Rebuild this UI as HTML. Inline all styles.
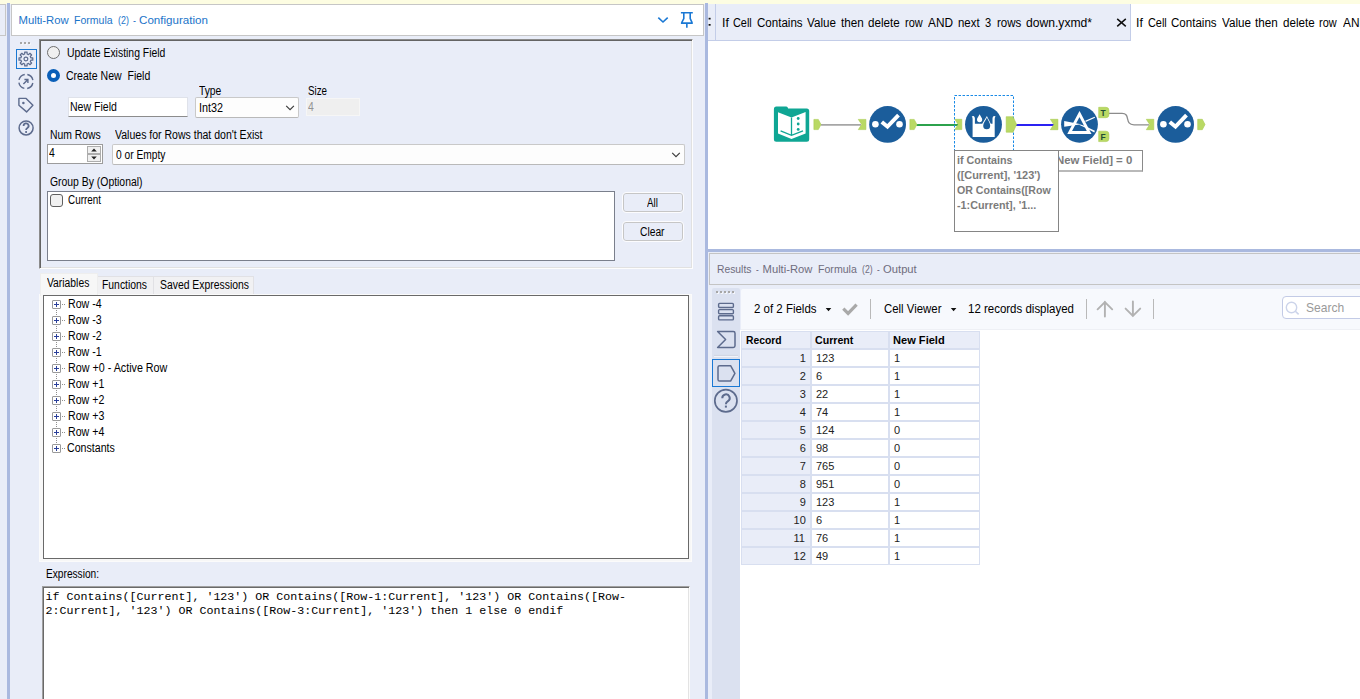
<!DOCTYPE html>
<html>
<head>
<meta charset="utf-8">
<title>Alteryx Designer</title>
<style>
html,body{margin:0;padding:0;}
body{width:1360px;height:699px;overflow:hidden;background:#e9edf8;font-family:"Liberation Sans",sans-serif;font-size:12px;color:#000;position:relative;}
.a{position:absolute;box-sizing:border-box;}
.t{position:absolute;white-space:pre;line-height:16px;height:16px;transform-origin:0 50%;}
svg{position:absolute;left:0;top:0;overflow:visible;}
#top{left:0;top:0;width:1360px;height:4px;background:#fdfde2;}
#lgut{left:-2px;top:4px;width:8px;height:32px;background:#e9edf8;border:1px solid #c6c6c6;}
#lbar{left:7px;top:3px;width:3px;height:700px;background:#aab9df;}
#chead{left:11px;top:4px;width:693px;height:32px;background:#fff;border:1px solid #c6c6c6;}
#vbar{left:705px;top:3px;width:3px;height:700px;background:#aab9df;}
#cfg{left:39px;top:39px;width:654px;height:230px;background:#e9edf8;border-top:1px solid #8c8c8c;border-left:1px solid #8c8c8c;border-right:1px solid #fdfdfd;border-bottom:1px solid #fdfdfd;box-shadow:inset 1px 1px 0 #646464,inset -1px -1px 0 #e1e1e1;}
#gearbox{left:16px;top:49px;width:21px;height:20px;border:1px solid #1a78d2;background:#e9edf8;}
.radio{width:13px;height:13px;border-radius:50%;}
.inp{background:#fff;border:1px solid #dfe2ea;border-bottom:1px solid #8c8c8c;}
.sel{background:#fdfdfd;border:1px solid #c9c9c9;border-bottom-color:#b9b9b9;border-radius:2px;}
.btn{background:#e9edf8;border:1px solid #fcfcfe;border-radius:4px;box-shadow:inset 0 0 0 1px #c6c6c6;}
.tab{background:#f1f1f3;border:1px solid #e1e1e5;border-bottom:none;}
.box{background:#fff;border:1px solid #696969;}
.tr{position:absolute;left:52px;width:9px;height:9px;box-sizing:border-box;border:1px solid #9a9a9a;background:#fff;border-radius:1px;}
.tr:before{content:"";position:absolute;left:1px;top:3px;width:5px;height:1px;background:#2a3f9a;}
.tr:after{content:"";position:absolute;left:3px;top:1px;width:1px;height:5px;background:#2a3f9a;}
#canvas{left:708px;top:4px;width:652px;height:245px;background:#fff;}
#tab1{left:715px;top:4px;width:416px;height:37px;background:#e9edf8;border:1px solid #c3cde8;border-top:none;}
#tab0{left:708px;top:4px;width:8px;height:37px;background:#e9edf8;border-bottom:1px solid #c3cde8;}
#hbar{left:708px;top:249px;width:652px;height:3px;background:#aab9df;}
#res{left:708px;top:252px;width:652px;height:447px;background:#e9edf8;}
#rhead{left:709px;top:253px;width:660px;height:32px;border:1px solid #c4c4c4;background:#e9edf8;}
#rside{left:712px;top:288px;width:28px;height:420px;background:#dbe1f0;border-radius:2px 2px 0 0;}
#rtool{left:741px;top:289px;width:619px;height:41px;background:#f7f9fd;border-radius:2px 0 0 0;border-bottom:1px solid #eef0f5;}
#rbody{left:740px;top:330px;width:620px;height:370px;background:#fff;}
#search{left:1282px;top:296px;width:90px;height:23px;background:#fff;border:1px solid #c3cbe6;border-radius:4px;}
table{position:absolute;left:741px;top:331px;border-collapse:separate;border-spacing:0;}
td{box-sizing:border-box;height:18px;padding:0;border-right:2px solid #d8dff0;border-bottom:2px solid #d8dff0;}
td.r0{height:19px;border-top:1px solid #d8dff0;}
td.c1{width:71px;border-left:1px solid #d8dff0;}
td.c2{width:78px;}
td.c3{width:90px;border-right-width:1px;}
td.h{background:#e9edf8;}
td.w{background:#fff;}
tr:last-child td{height:17px;border-bottom-width:1px;}
</style>
</head>
<body>
<div class="a" id="top"></div>
<div class="a" id="lgut"></div>
<div class="a" id="lbar"></div>
<div class="a" id="chead"></div>
<div class="a" id="vbar"></div>
<div class="a" id="cfg"></div>
<div class="a" id="gearbox"></div>
<!-- radios -->
<div class="a radio" style="left:47px;top:46px;background:#f0f0f0;border:1px solid #6e6e6e;"></div>
<div class="a radio" style="left:47px;top:69px;background:#fff;border:4px solid #0a5fb8;"></div>
<!-- inputs -->
<div class="a inp" style="left:68px;top:97px;width:120px;height:20px;"></div>
<div class="a sel" style="left:195px;top:97px;width:104px;height:21px;"></div>
<div class="a" style="left:306px;top:98px;width:54px;height:18px;background:#efefef;border:1px solid #f6f6f6;"></div>
<div class="a" style="left:47px;top:144px;width:56px;height:20px;background:#fff;border:1px solid #9c9c9c;"></div>
<div class="a" style="left:87px;top:146px;width:14px;height:8px;background:#f0f0f0;border:1px solid #adadad;"></div>
<div class="a" style="left:87px;top:154px;width:14px;height:8px;background:#f0f0f0;border:1px solid #adadad;"></div>
<div class="a sel" style="left:112px;top:144px;width:573px;height:21px;"></div>
<div class="a" style="left:47px;top:191px;width:568px;height:70px;background:#fff;border:1px solid #7a7f8c;"></div>
<div class="a" style="left:50px;top:194px;width:13px;height:13px;background:#f1f1f1;border:1px solid #5f5f5f;border-radius:3px;"></div>
<div class="a btn" style="left:622px;top:192px;width:62px;height:21px;"></div>
<div class="a btn" style="left:622px;top:221px;width:62px;height:21px;"></div>
<!-- tabs -->
<div class="a tab" style="left:97px;top:276px;width:57px;height:18px;"></div>
<div class="a tab" style="left:153px;top:276px;width:101px;height:18px;"></div>
<div class="a" style="left:39px;top:294px;width:653px;height:268px;background:#f7f7f7;border:1px solid #fbfbfb;"></div>
<div class="a" style="left:40px;top:273px;width:58px;height:23px;background:#f7f7f7;border:1px solid #eeeeee;border-bottom:none;"></div>
<div class="a box" style="left:43px;top:295px;width:646px;height:264px;"></div>
<div class="a" style="left:42px;top:586px;width:648px;height:130px;background:#fff;border-top:1px solid #a0a0a0;border-left:1px solid #a0a0a0;border-right:1px solid #fbfbfb;box-shadow:inset 1px 1px 0 #696969,inset -1px 0 0 #e3e3e3;"></div>
<div class="tr" style="top:300px"></div><div class="tr" style="top:316px"></div><div class="tr" style="top:332px"></div><div class="tr" style="top:348px"></div><div class="tr" style="top:364px"></div><div class="tr" style="top:380px"></div><div class="tr" style="top:396px"></div><div class="tr" style="top:412px"></div><div class="tr" style="top:428px"></div><div class="tr" style="top:444px"></div>
<!-- right side -->
<div class="a" id="canvas"></div>
<div class="a" id="tab0"></div>
<div class="a" id="tab1"></div>
<div class="a" id="hbar"></div>
<div class="a" id="res"></div>
<div class="a" id="rhead"></div>
<div class="a" id="rside"></div>
<div class="a" id="rtool"></div>
<div class="a" id="rbody"></div>
<div class="a" id="search"></div>
<table><tr><td class="h c1 r0"></td><td class="h c2 r0"></td><td class="h c3 r0"></td></tr><tr><td class="h c1"></td><td class="w c2"></td><td class="w c3"></td></tr><tr><td class="h c1"></td><td class="w c2"></td><td class="w c3"></td></tr><tr><td class="h c1"></td><td class="w c2"></td><td class="w c3"></td></tr><tr><td class="h c1"></td><td class="w c2"></td><td class="w c3"></td></tr><tr><td class="h c1"></td><td class="w c2"></td><td class="w c3"></td></tr><tr><td class="h c1"></td><td class="w c2"></td><td class="w c3"></td></tr><tr><td class="h c1"></td><td class="w c2"></td><td class="w c3"></td></tr><tr><td class="h c1"></td><td class="w c2"></td><td class="w c3"></td></tr><tr><td class="h c1"></td><td class="w c2"></td><td class="w c3"></td></tr><tr><td class="h c1"></td><td class="w c2"></td><td class="w c3"></td></tr><tr><td class="h c1"></td><td class="w c2"></td><td class="w c3"></td></tr><tr><td class="h c1"></td><td class="w c2"></td><td class="w c3"></td></tr></table>
<!-- annotation boxes -->
<div class="a" style="left:1058px;top:150px;width:85px;height:22px;background:#fff;border:1px solid #8a8a8a;border-bottom:2px solid #b9b9b9;overflow:hidden;"></div>
<div class="a" style="left:954px;top:150px;width:105px;height:82px;background:#fff;border:1px solid #858585;z-index:5;"></div>
<svg width="1360" height="699" viewBox="0 0 1360 699">
<rect x="21" y="43" width="2" height="2" fill="#f4f6fb"/><rect x="20" y="42" width="2" height="2" fill="#a6a6a6"/>
<rect x="25" y="43" width="2" height="2" fill="#f4f6fb"/><rect x="24" y="42" width="2" height="2" fill="#a6a6a6"/>
<rect x="29" y="43" width="2" height="2" fill="#f4f6fb"/><rect x="28" y="42" width="2" height="2" fill="#a6a6a6"/>
<path d="M24.70 52.10 L27.10 52.10 L27.09 54.04 L28.56 54.65 L29.93 53.27 L31.63 54.97 L30.25 56.34 L30.86 57.81 L32.80 57.80 L32.80 60.20 L30.86 60.19 L30.25 61.66 L31.63 63.03 L29.93 64.73 L28.56 63.35 L27.09 63.96 L27.10 65.90 L24.70 65.90 L24.71 63.96 L23.24 63.35 L21.87 64.73 L20.17 63.03 L21.55 61.66 L20.94 60.19 L19.00 60.20 L19.00 57.80 L20.94 57.81 L21.55 56.34 L20.17 54.97 L21.87 53.27 L23.24 54.65 L24.71 54.04Z" fill="none" stroke="#5d6b8d" stroke-width="1.2" stroke-linejoin="round"/><circle cx="25.9" cy="59" r="1.9" fill="none" stroke="#5d6b8d" stroke-width="1.2"/>
<circle cx="25.9" cy="81.5" r="7.1" fill="none" stroke="#5d6b8d" stroke-width="1.4" stroke-dasharray="8.2 2.95" stroke-dashoffset="-1.48" transform="rotate(-90 25.9 81.5)"/>
<path d="M23.4 84 L27.7 79.7 M24.4 79.5 H27.9 V83" fill="none" stroke="#5d6b8d" stroke-width="1.4"/>
<path d="M18.9 98.4 H26.1 L32.9 105.3 L26.6 111.9 L18.9 105.2 Z" fill="none" stroke="#5d6b8d" stroke-width="1.4" stroke-linejoin="round"/><circle cx="23.4" cy="102.9" r="1.25" fill="#5d6b8d"/>
<circle cx="26.1" cy="127.9" r="7" fill="none" stroke="#5d6b8d" stroke-width="1.5"/>
<path d="M23.6 126.0 A2.5 2.5 0 1 1 27.4 128.0 Q26.1 128.8 26.1 130.0" fill="none" stroke="#5d6b8d" stroke-width="1.8"/><rect x="25.2" y="131.1" width="1.8" height="1.8" fill="#5d6b8d"/>
<path d="M658.3 17.6 L663 22 L667.7 17.6" fill="none" stroke="#1a78d4" stroke-width="1.6"/>
<path d="M680.9 12.7 H692.8 M683.8 12.7 V18.6 L681.6 22.9 M690.2 12.7 V18.6 L692.2 22.9 M680.9 23.1 H692.8 M686.85 23.1 V27.8" fill="none" stroke="#1a78d4" stroke-width="1.6"/>
<path d="M286.2 105.8 L290.05 109.7 L293.9 105.8" fill="none" stroke="#3c3c3c" stroke-width="1.15"/>
<path d="M672.2 152.9 L676 156.75 L679.8 152.9" fill="none" stroke="#3c3c3c" stroke-width="1.15"/>
<path d="M91.2 151.6 L94 148.4 L96.8 151.6Z M91.2 156.4 L94 159.6 L96.8 156.4Z" fill="#222"/>
<path d="M56.5 310 V316" stroke="#8f8f8f" stroke-width="1" stroke-dasharray="1 1" fill="none"/>
<path d="M62 304.5 H66" stroke="#8f8f8f" stroke-width="1" stroke-dasharray="1 1" fill="none"/>
<path d="M56.5 326 V332" stroke="#8f8f8f" stroke-width="1" stroke-dasharray="1 1" fill="none"/>
<path d="M62 320.5 H66" stroke="#8f8f8f" stroke-width="1" stroke-dasharray="1 1" fill="none"/>
<path d="M56.5 342 V348" stroke="#8f8f8f" stroke-width="1" stroke-dasharray="1 1" fill="none"/>
<path d="M62 336.5 H66" stroke="#8f8f8f" stroke-width="1" stroke-dasharray="1 1" fill="none"/>
<path d="M56.5 358 V364" stroke="#8f8f8f" stroke-width="1" stroke-dasharray="1 1" fill="none"/>
<path d="M62 352.5 H66" stroke="#8f8f8f" stroke-width="1" stroke-dasharray="1 1" fill="none"/>
<path d="M56.5 374 V380" stroke="#8f8f8f" stroke-width="1" stroke-dasharray="1 1" fill="none"/>
<path d="M62 368.5 H66" stroke="#8f8f8f" stroke-width="1" stroke-dasharray="1 1" fill="none"/>
<path d="M56.5 390 V396" stroke="#8f8f8f" stroke-width="1" stroke-dasharray="1 1" fill="none"/>
<path d="M62 384.5 H66" stroke="#8f8f8f" stroke-width="1" stroke-dasharray="1 1" fill="none"/>
<path d="M56.5 406 V412" stroke="#8f8f8f" stroke-width="1" stroke-dasharray="1 1" fill="none"/>
<path d="M62 400.5 H66" stroke="#8f8f8f" stroke-width="1" stroke-dasharray="1 1" fill="none"/>
<path d="M56.5 422 V428" stroke="#8f8f8f" stroke-width="1" stroke-dasharray="1 1" fill="none"/>
<path d="M62 416.5 H66" stroke="#8f8f8f" stroke-width="1" stroke-dasharray="1 1" fill="none"/>
<path d="M56.5 438 V444" stroke="#8f8f8f" stroke-width="1" stroke-dasharray="1 1" fill="none"/>
<path d="M62 432.5 H66" stroke="#8f8f8f" stroke-width="1" stroke-dasharray="1 1" fill="none"/>
<path d="M62 448.5 H66" stroke="#8f8f8f" stroke-width="1" stroke-dasharray="1 1" fill="none"/>
<rect x="708.6" y="17.8" width="2" height="1.7" fill="#111"/><rect x="708.6" y="24" width="2" height="1.7" fill="#111"/>
<path d="M1117.2 18.9 L1125.8 26.4 M1125.8 18.9 L1117.2 26.4" stroke="#111" stroke-width="1.5" fill="none"/>
<path d="M821 124.9 H861" stroke="#a6a6a6" stroke-width="1.8" fill="none"/>
<path d="M916.5 124.9 H958" stroke="#2ca24c" stroke-width="2" fill="none"/>
<path d="M1016 125 H1054" stroke="#2b22f2" stroke-width="2" fill="none"/>
<path d="M1108.5 113.3 H1122 C1131 113.3 1124 124.8 1134 124.8 H1149" stroke="#8c8c8c" stroke-width="1.3" fill="none"/>
<path d="M776.4 106.5 H786.3 Q787.6 106.5 788.2 108.6 H806.7 Q809.2 108.6 809.2 111.1 V139.3 Q809.2 141.8 806.7 141.8 H776.4 Q773.9 141.8 773.9 139.3 V109 Q773.9 106.5 776.4 106.5Z" fill="#0fa694"/>
<path d="M778 112.3 L791.5 117.6 L805.6 112.1 V133.5 L791.5 138.9 L778 133.5Z" fill="#fff"/>
<path d="M791.5 117.6 V135.5 M780.6 130.9 L791.5 135.4 L803 130.9" fill="none" stroke="#0fa694" stroke-width="1.3"/>
<circle cx="798.2" cy="118.5" r="1.4" fill="#0fa694"/>
<circle cx="798.2" cy="124.0" r="1.4" fill="#0fa694"/>
<circle cx="798.2" cy="129.4" r="1.4" fill="#0fa694"/>
<path d="M813.9 119.4 H818.3 L821 124.5 L818.3 129.6 H813.9Z" fill="#b9d964" stroke="#a9cb52" stroke-width="0.6"/>
<path d="M858.3 119.4 H865.9 V129.6 H858.3 L861.6999999999999 124.5Z" fill="#b9d964" stroke="#a9cb52" stroke-width="0.6"/>
<circle cx="887.6" cy="124.4" r="18.4" fill="#1b5d9b"/><circle cx="875.4" cy="124.2" r="3.3" fill="#fff"/><circle cx="899.5" cy="124.2" r="3.3" fill="#fff"/><path d="M881.8 121.9 L887.5 126.7 L898.5 115.2" fill="none" stroke="#fff" stroke-width="3.9"/>
<path d="M909.9 119.4 H914.1999999999999 L916.9 124.5 L914.1999999999999 129.6 H909.9Z" fill="#b9d964" stroke="#a9cb52" stroke-width="0.6"/>
<rect x="954.5" y="95.5" width="59" height="55" fill="none" stroke="#1a8ae6" stroke-width="1" stroke-dasharray="2.5 1.5"/>
<path d="M954.8 119.3 H961.8 V129.6 H954.8 L958.1999999999999 124.44999999999999Z" fill="#b9d964" stroke="#a9cb52" stroke-width="0.6"/>
<circle cx="983.5" cy="124.4" r="18.45" fill="#1b5d9b"/>
<path d="M971.7 116.6 Q972.6 115.6 973.6 116 Q974.9 116.6 974.9 118.5 V123.8 H982.2 L986.9 115.9 L990.8 123.8 H992.5 V118.5 Q992.5 116.6 993.8 116 Q994.8 115.6 995.6 116.6 Q994.7 117.3 994.7 119 V137.1 H972.6 V119 Q972.6 117.3 971.7 116.6Z" fill="#fff"/>
<path d="M986.9 117.6 C985.6 120.6 983.2 123 983.2 125.8 A3.5 3.5 0 0 0 990.2 125.8 C990.2 123 988.2 120.6 986.9 117.6Z" fill="#1b5d9b"/>
<path d="M979.6 114.3 C978.6 116.6 977 118 977 119.6 A2.6 2.6 0 0 0 982.2 119.6 C982.2 118 980.6 116.6 979.6 114.3Z" fill="#fff"/>
<path d="M1006.2 116.7 H1013.0 L1016.6 124.44999999999999 L1013.0 132.2 H1006.2Z" fill="#b9d964" stroke="#a9cb52" stroke-width="0.6"/>
<path d="M1050.4 119.3 H1057.9 V129.7 H1050.4 L1053.8000000000002 124.5Z" fill="#b9d964" stroke="#a9cb52" stroke-width="0.6"/>
<circle cx="1079.5" cy="124.3" r="18.4" fill="#1b5d9b"/>
<path d="M1079.5 114 L1089.2 132.5 H1069.6Z" fill="none" stroke="#fff" stroke-width="2.8" stroke-linejoin="miter"/>
<path d="M1064.2 121.1 V126.7 L1079.6 124.6 V123.9Z" fill="#fff"/>
<path d="M1085.5 121.4 L1094.8 117.3" stroke="#fff" stroke-width="1.2" fill="none"/>
<path d="M1079.5 124.2 Q1086 126 1094.9 130.8 L1094.3 132.4 Q1086 127.6 1079.5 124.9Z" fill="#fff"/>
<path d="M1098.7 107.3 H1106 Q1108.9 107.3 1108.9 110.3 V114.7 Q1108.9 117.7 1106 117.7 H1098.7Z" fill="#b9d964" stroke="#a9cb52" stroke-width="0.6"/><text x="1103.2" y="115.7" font-family="Liberation Sans" font-size="8.5" font-weight="700" fill="#1f4d35" text-anchor="middle">T</text>
<path d="M1098.7 131.2 H1106 Q1108.9 131.2 1108.9 134.2 V138.6 Q1108.9 141.6 1106 141.6 H1098.7Z" fill="#b9d964" stroke="#a9cb52" stroke-width="0.6"/><text x="1103.2" y="139.6" font-family="Liberation Sans" font-size="8.5" font-weight="700" fill="#1f4d35" text-anchor="middle">F</text>
<path d="M1146.3 119.3 H1153.8 V129.7 H1146.3 L1149.7 124.5Z" fill="#b9d964" stroke="#a9cb52" stroke-width="0.6"/>
<circle cx="1175.6" cy="124.4" r="18.4" fill="#1b5d9b"/><circle cx="1163.3999999999999" cy="124.2" r="3.3" fill="#fff"/><circle cx="1187.5" cy="124.2" r="3.3" fill="#fff"/><path d="M1169.8 121.9 L1175.5 126.7 L1186.5 115.2" fill="none" stroke="#fff" stroke-width="3.9"/>
<path d="M1197.7 119.3 H1202.3 L1205 124.5 L1202.3 129.7 H1197.7Z" fill="#b9d964" stroke="#a9cb52" stroke-width="0.6"/>
<rect x="717" y="292" width="2" height="2" fill="#f4f6fb"/><rect x="716" y="291" width="2" height="2" fill="#a6a6a6"/>
<rect x="721" y="292" width="2" height="2" fill="#f4f6fb"/><rect x="720" y="291" width="2" height="2" fill="#a6a6a6"/>
<rect x="725" y="292" width="2" height="2" fill="#f4f6fb"/><rect x="724" y="291" width="2" height="2" fill="#a6a6a6"/>
<rect x="729" y="292" width="2" height="2" fill="#f4f6fb"/><rect x="728" y="291" width="2" height="2" fill="#a6a6a6"/>
<rect x="733" y="292" width="2" height="2" fill="#f4f6fb"/><rect x="732" y="291" width="2" height="2" fill="#a6a6a6"/>
<rect x="718.6" y="303.4" width="14.8" height="4.1" rx="1" fill="none" stroke="#5d6b8d" stroke-width="1.4"/>
<rect x="718.6" y="309.6" width="14.8" height="4.1" rx="1" fill="none" stroke="#5d6b8d" stroke-width="1.4"/>
<rect x="718.6" y="315.8" width="14.8" height="4.1" rx="1" fill="none" stroke="#5d6b8d" stroke-width="1.4"/>
<path d="M717.6 331.5 H733.3 Q735 331.5 735 333.2 V345.8 Q735 347.5 733.3 347.5 H717.6 L725.6 339.5Z" fill="none" stroke="#5d6b8d" stroke-width="1.5" stroke-linejoin="round"/>
<rect x="714" y="355.8" width="24" height="1" fill="#f7f8fc"/><rect x="714" y="354.9" width="24" height="0.9" fill="#cfd3df"/>
<rect x="712.5" y="359.5" width="27" height="27" fill="none" stroke="#1a78d4" stroke-width="1"/>
<path d="M719.6 365.7 H730.6 L734.9 373.4 L730.6 381.1 H719.6 Q718 381.1 718 379.5 V367.3 Q718 365.7 719.6 365.7Z" fill="none" stroke="#5d6b8d" stroke-width="1.5" stroke-linejoin="round"/>
<circle cx="725.9" cy="400.8" r="11.1" fill="none" stroke="#5d6b8d" stroke-width="1.7"/>
<path d="M722.3 398.3 A3.7 3.7 0 1 1 728.0 401.2 Q725.9 402.5 725.9 404.2" fill="none" stroke="#5d6b8d" stroke-width="2"/><rect x="724.9" y="405.6" width="2" height="2" fill="#5d6b8d"/>
<path d="M825.7 308.1 H831.3 L828.5 311.3Z M950.8 308.1 H956.4 L953.6 311.3Z" fill="#111"/>
<path d="M843.3 308.6 L848.1 313.4 L856.6 304.7" fill="none" stroke="#a9a9a9" stroke-width="3.2"/>
<rect x="870.0" y="299" width="1" height="20" fill="#b9b9b9"/>
<rect x="1086.0" y="299" width="1" height="20" fill="#b9b9b9"/>
<rect x="1153.0" y="299" width="1" height="20" fill="#b9b9b9"/>
<path d="M1104.9 301.8 V316.5 M1097.6 309.3 L1104.9 302 L1112.2 309.3" fill="none" stroke="#b2b2b2" stroke-width="1.9" stroke-linecap="round" stroke-linejoin="miter"/>
<path d="M1132.9 301.5 V316 M1125.6 308.6 L1132.9 315.9 L1140.2 308.6" fill="none" stroke="#b2b2b2" stroke-width="1.9" stroke-linecap="round" stroke-linejoin="miter"/>
<circle cx="1291.5" cy="307.5" r="5.2" fill="none" stroke="#ccd4ea" stroke-width="1.4"/><path d="M1295.4 311.3 L1298.6 314.4" stroke="#ccd4ea" stroke-width="1.6" fill="none"/>
</svg>
<span class="t" style="left:18.50px;top:12.0px;font-size:11.3px;color:#1b74c9;">Multi-Row</span>
<span class="t" style="left:73.80px;top:12.0px;font-size:11.3px;color:#1b74c9;transform:scaleX(0.9324);">Formula</span>
<span class="t" style="left:117.80px;top:12.0px;font-size:11.3px;color:#1b74c9;transform:scaleX(0.7903);">(2)</span>
<span class="t" style="left:133.20px;top:12.0px;font-size:11.3px;color:#1b74c9;transform:scaleX(0.7750);">-</span>
<span class="t" style="left:139.40px;top:12.0px;font-size:11.3px;color:#1b74c9;transform:scaleX(1.0267);">Configuration</span>
<span class="t" style="left:66.60px;top:45.3px;font-size:12px;transform:scaleX(0.8677);">Update Existing Field</span>
<span class="t" style="left:65.60px;top:68.4px;font-size:12px;transform:scaleX(0.8777);">Create New  Field</span>
<span class="t" style="left:198.70px;top:83.4px;font-size:12px;transform:scaleX(0.8580);">Type</span>
<span class="t" style="left:308.00px;top:83.4px;font-size:12px;transform:scaleX(0.8154);">Size</span>
<span class="t" style="left:70.00px;top:98.8px;font-size:12px;transform:scaleX(0.8790);">New Field</span>
<span class="t" style="left:198.50px;top:99.8px;font-size:12px;transform:scaleX(0.8995);">Int32</span>
<span class="t" style="left:307.90px;top:98.8px;font-size:12px;color:#939393;transform:scaleX(0.8700);">4</span>
<span class="t" style="left:50.40px;top:126.8px;font-size:12px;transform:scaleX(0.8641);">Num Rows</span>
<span class="t" style="left:115.00px;top:126.8px;font-size:12px;transform:scaleX(0.8767);">Values for Rows that don&#x27;t Exist</span>
<span class="t" style="left:49.00px;top:144.8px;font-size:12px;transform:scaleX(0.8700);">4</span>
<span class="t" style="left:115.80px;top:146.8px;font-size:12px;transform:scaleX(0.8514);">0 or Empty</span>
<span class="t" style="left:49.50px;top:173.6px;font-size:12px;transform:scaleX(0.8668);">Group By (Optional)</span>
<span class="t" style="left:67.60px;top:191.5px;font-size:12px;transform:scaleX(0.8235);">Current</span>
<span class="t" style="left:647.20px;top:194.8px;font-size:12px;transform:scaleX(0.8129);">All</span>
<span class="t" style="left:639.50px;top:224.0px;font-size:12px;transform:scaleX(0.8543);">Clear</span>
<span class="t" style="left:47.00px;top:274.8px;font-size:12px;transform:scaleX(0.8609);">Variables</span>
<span class="t" style="left:102.20px;top:277.4px;font-size:12px;transform:scaleX(0.8650);">Functions</span>
<span class="t" style="left:160.00px;top:277.4px;font-size:12px;transform:scaleX(0.8664);">Saved Expressions</span>
<span class="t" style="left:68.30px;top:295.8px;font-size:12px;transform:scaleX(0.8850);">Row -4</span>
<span class="t" style="left:68.30px;top:311.8px;font-size:12px;transform:scaleX(0.8850);">Row -3</span>
<span class="t" style="left:68.30px;top:327.8px;font-size:12px;transform:scaleX(0.8850);">Row -2</span>
<span class="t" style="left:68.30px;top:343.8px;font-size:12px;transform:scaleX(0.8850);">Row -1</span>
<span class="t" style="left:68.30px;top:359.8px;font-size:12px;transform:scaleX(0.8943);">Row +0 - Active Row</span>
<span class="t" style="left:68.30px;top:375.8px;font-size:12px;transform:scaleX(0.8850);">Row +1</span>
<span class="t" style="left:68.30px;top:391.8px;font-size:12px;transform:scaleX(0.8850);">Row +2</span>
<span class="t" style="left:68.30px;top:407.8px;font-size:12px;transform:scaleX(0.8850);">Row +3</span>
<span class="t" style="left:68.30px;top:423.8px;font-size:12px;transform:scaleX(0.8850);">Row +4</span>
<span class="t" style="left:67.40px;top:439.8px;font-size:12px;transform:scaleX(0.8850);">Constants</span>
<span class="t" style="left:45.80px;top:565.6px;font-size:12px;transform:scaleX(0.8467);">Expression:</span>
<span class="t" style="left:45.50px;top:588.6px;font-size:11.667px;font-family:'Liberation Mono';">if Contains([Current], &#x27;123&#x27;) OR Contains([Row-1:Current], &#x27;123&#x27;) OR Contains([Row-</span>
<span class="t" style="left:45.50px;top:602.7px;font-size:11.667px;font-family:'Liberation Mono';">2:Current], &#x27;123&#x27;) OR Contains([Row-3:Current], &#x27;123&#x27;) then 1 else 0 endif</span>
<span class="t" style="left:721.61px;top:14.5px;font-size:12.5px;transform:scaleX(0.9887);">If</span>
<span class="t" style="left:732.90px;top:14.5px;font-size:12.5px;transform:scaleX(0.8720);">Cell</span>
<span class="t" style="left:756.60px;top:14.5px;font-size:12.5px;transform:scaleX(0.9249);">Contains</span>
<span class="t" style="left:806.90px;top:14.5px;font-size:12.5px;transform:scaleX(0.9328);">Value</span>
<span class="t" style="left:840.70px;top:14.5px;font-size:12.5px;transform:scaleX(0.9353);">then</span>
<span class="t" style="left:867.90px;top:14.5px;font-size:12.5px;transform:scaleX(0.9295);">delete</span>
<span class="t" style="left:904.70px;top:14.5px;font-size:12.5px;transform:scaleX(0.8762);">row</span>
<span class="t" style="left:928.20px;top:14.5px;font-size:12.5px;transform:scaleX(0.9482);">AND</span>
<span class="t" style="left:957.60px;top:14.5px;font-size:12.5px;transform:scaleX(0.9150);">next</span>
<span class="t" style="left:985.00px;top:14.5px;font-size:12.5px;transform:scaleX(0.8857);">3</span>
<span class="t" style="left:996.50px;top:14.5px;font-size:12.5px;transform:scaleX(0.9219);">rows</span>
<span class="t" style="left:1025.60px;top:14.5px;font-size:12.5px;transform:scaleX(0.9704);">down.yxmd*</span>
<span class="t" style="left:1136.21px;top:14.5px;font-size:12.5px;transform:scaleX(0.9887);">If</span>
<span class="t" style="left:1147.50px;top:14.5px;font-size:12.5px;transform:scaleX(0.8720);">Cell</span>
<span class="t" style="left:1171.20px;top:14.5px;font-size:12.5px;transform:scaleX(0.9249);">Contains</span>
<span class="t" style="left:1221.50px;top:14.5px;font-size:12.5px;transform:scaleX(0.9328);">Value</span>
<span class="t" style="left:1255.30px;top:14.5px;font-size:12.5px;transform:scaleX(0.9353);">then</span>
<span class="t" style="left:1282.50px;top:14.5px;font-size:12.5px;transform:scaleX(0.9295);">delete</span>
<span class="t" style="left:1319.30px;top:14.5px;font-size:12.5px;transform:scaleX(0.8762);">row</span>
<span class="t" style="left:1342.80px;top:14.5px;font-size:12.5px;transform:scaleX(0.9482);">AND</span>
<span class="t" style="left:716.50px;top:260.8px;font-size:11.2px;color:#6f6c7d;transform:scaleX(0.9228);">Results</span>
<span class="t" style="left:756.10px;top:260.8px;font-size:11.2px;color:#6f6c7d;transform:scaleX(0.7250);">-</span>
<span class="t" style="left:762.60px;top:260.8px;font-size:11.2px;color:#6f6c7d;">Multi-Row</span>
<span class="t" style="left:817.60px;top:260.8px;font-size:11.2px;color:#6f6c7d;transform:scaleX(0.9472);">Formula</span>
<span class="t" style="left:861.80px;top:260.8px;font-size:11.2px;color:#6f6c7d;transform:scaleX(0.7743);">(2)</span>
<span class="t" style="left:877.00px;top:260.8px;font-size:11.2px;color:#6f6c7d;transform:scaleX(0.7250);">-</span>
<span class="t" style="left:883.10px;top:260.8px;font-size:11.2px;color:#6f6c7d;">Output</span>
<span class="t" style="left:753.80px;top:300.6px;font-size:12.5px;transform:scaleX(0.9183);">2 of 2 Fields</span>
<span class="t" style="left:883.50px;top:300.6px;font-size:12.5px;transform:scaleX(0.9120);">Cell Viewer</span>
<span class="t" style="left:967.50px;top:300.6px;font-size:12.5px;transform:scaleX(0.9186);">12 records displayed</span>
<span class="t" style="left:1305.50px;top:300.0px;font-size:13px;color:#9a9a9a;transform:scaleX(0.9253);">Search</span>
<span class="t" style="left:745.50px;top:331.8px;font-size:11px;font-weight:700;transform:scaleX(0.9387);">Record</span>
<span class="t" style="left:815.10px;top:331.8px;font-size:11px;font-weight:700;transform:scaleX(0.9660);">Current</span>
<span class="t" style="left:893.40px;top:331.8px;font-size:11px;font-weight:700;transform:scaleX(1.0074);">New Field</span>
<span class="t" style="left:799.68px;top:350.4px;font-size:11px;color:#222;">1</span>
<span class="t" style="left:816.00px;top:350.4px;font-size:11px;color:#222;">123</span>
<span class="t" style="left:893.90px;top:350.4px;font-size:11px;color:#222;">1</span>
<span class="t" style="left:799.68px;top:368.4px;font-size:11px;color:#222;">2</span>
<span class="t" style="left:816.00px;top:368.4px;font-size:11px;color:#222;">6</span>
<span class="t" style="left:893.90px;top:368.4px;font-size:11px;color:#222;">1</span>
<span class="t" style="left:799.68px;top:386.4px;font-size:11px;color:#222;">3</span>
<span class="t" style="left:816.00px;top:386.4px;font-size:11px;color:#222;">22</span>
<span class="t" style="left:893.90px;top:386.4px;font-size:11px;color:#222;">1</span>
<span class="t" style="left:799.68px;top:404.4px;font-size:11px;color:#222;">4</span>
<span class="t" style="left:816.00px;top:404.4px;font-size:11px;color:#222;">74</span>
<span class="t" style="left:893.90px;top:404.4px;font-size:11px;color:#222;">1</span>
<span class="t" style="left:799.68px;top:422.4px;font-size:11px;color:#222;">5</span>
<span class="t" style="left:816.00px;top:422.4px;font-size:11px;color:#222;">124</span>
<span class="t" style="left:893.90px;top:422.4px;font-size:11px;color:#222;">0</span>
<span class="t" style="left:799.68px;top:440.4px;font-size:11px;color:#222;">6</span>
<span class="t" style="left:816.00px;top:440.4px;font-size:11px;color:#222;">98</span>
<span class="t" style="left:893.90px;top:440.4px;font-size:11px;color:#222;">0</span>
<span class="t" style="left:799.68px;top:458.4px;font-size:11px;color:#222;">7</span>
<span class="t" style="left:816.00px;top:458.4px;font-size:11px;color:#222;">765</span>
<span class="t" style="left:893.90px;top:458.4px;font-size:11px;color:#222;">0</span>
<span class="t" style="left:799.68px;top:476.4px;font-size:11px;color:#222;">8</span>
<span class="t" style="left:816.00px;top:476.4px;font-size:11px;color:#222;">951</span>
<span class="t" style="left:893.90px;top:476.4px;font-size:11px;color:#222;">0</span>
<span class="t" style="left:799.68px;top:494.4px;font-size:11px;color:#222;">9</span>
<span class="t" style="left:816.00px;top:494.4px;font-size:11px;color:#222;">123</span>
<span class="t" style="left:893.90px;top:494.4px;font-size:11px;color:#222;">1</span>
<span class="t" style="left:793.56px;top:512.4px;font-size:11px;color:#222;">10</span>
<span class="t" style="left:816.00px;top:512.4px;font-size:11px;color:#222;">6</span>
<span class="t" style="left:893.90px;top:512.4px;font-size:11px;color:#222;">1</span>
<span class="t" style="left:793.56px;top:530.4px;font-size:11px;color:#222;">11</span>
<span class="t" style="left:816.00px;top:530.4px;font-size:11px;color:#222;">76</span>
<span class="t" style="left:893.90px;top:530.4px;font-size:11px;color:#222;">1</span>
<span class="t" style="left:793.56px;top:548.4px;font-size:11px;color:#222;">12</span>
<span class="t" style="left:816.00px;top:548.4px;font-size:11px;color:#222;">49</span>
<span class="t" style="left:893.90px;top:548.4px;font-size:11px;color:#222;">1</span>
<span class="t" style="left:956.60px;top:152.1px;font-size:11px;font-weight:700;color:#7b7b7b;transform:scaleX(0.9768);z-index:6;">if Contains</span>
<span class="t" style="left:956.60px;top:167.2px;font-size:11px;font-weight:700;color:#7b7b7b;transform:scaleX(0.9928);z-index:6;">([Current], &#x27;123&#x27;)</span>
<span class="t" style="left:956.60px;top:182.1px;font-size:11px;font-weight:700;color:#7b7b7b;transform:scaleX(0.9641);z-index:6;">OR Contains([Row</span>
<span class="t" style="left:956.60px;top:197.1px;font-size:11px;font-weight:700;color:#7b7b7b;transform:scaleX(0.9791);z-index:6;">-1:Current], &#x27;1...</span>
<span class="t" style="left:1056.30px;top:152.1px;font-size:11px;font-weight:700;color:#7b7b7b;transform:scaleX(1.0348);">New Field] = 0</span>
</body>
</html>
